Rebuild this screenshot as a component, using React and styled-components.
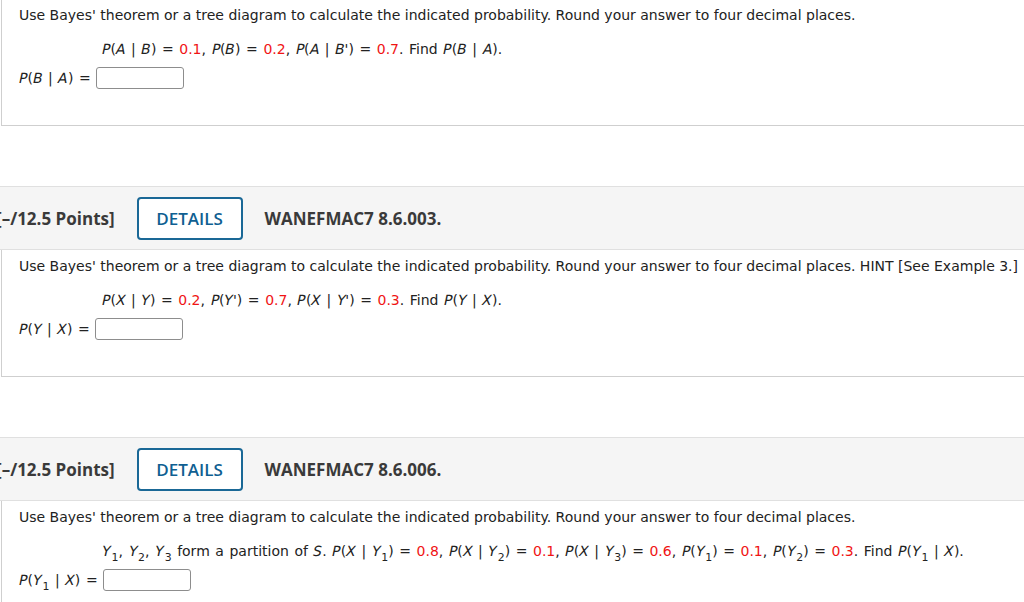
import React from 'react';
import styled, { createGlobalStyle } from 'styled-components';

const GlobalStyle = createGlobalStyle`
  html, body {
    margin: 0;
    padding: 0;
    background: #ffffff;
    overflow: hidden;
  }
`;

const Page = styled.main`
  width: 1040px;
  margin-top: -1px;
`;

const QuestionBox = styled.section`
  margin-left: 1px;
  border-left: 1px solid #cfcfcf;
  border-bottom: 1px solid #cfcfcf;
  padding: 6px 0 35px 17px;
  font-family: "DejaVu Sans", Verdana, sans-serif;
  font-size: 14px;
  color: #222;
`;

const Prompt = styled.p`
  margin: 0;
  line-height: 20px;
  white-space: nowrap;
`;

const Formula = styled.p`
  margin: 14px 0 0 83px;
  line-height: 20px;
  white-space: nowrap;
  word-spacing: 1.1px;
`;

const AnswerRow = styled.div`
  display: flex;
  align-items: center;
  gap: 5px;
  margin-top: 7px;
  height: 24px;
  word-spacing: 1.1px;
`;

const AnswerInput = styled.input`
  width: ${(p) => p.$width || 86}px;
  height: 20px;
  box-sizing: content-box;
  padding: 0;
  border: 1px solid #8d8d8d;
  border-radius: 3px;
  background: #fff;
`;

const Var = styled.i`
  display: inline-block;
  font-style: normal;
  transform: skewX(-12deg);
`;

const Num = styled.span`
  color: #f01414;
`;

const Sub = styled.sub`
  font-size: 0.78em;
  vertical-align: -0.45em;
  line-height: 0;
  margin-left: 1px;
`;

const Header = styled.header`
  display: flex;
  align-items: center;
  height: 62px;
  margin-top: 60px;
  background: #f5f5f5;
  border-top: 1px solid #e0e0e0;
  border-bottom: 1px solid #e0e0e0;
  font-family: "Open Sans", sans-serif;
  font-size: 17px;
  font-weight: 700;
  color: #3a3a3a;
`;

const Points = styled.span`
  margin-left: -4px;
`;

const DetailsButton = styled.button`
  margin-left: 22px;
  width: 106px;
  height: 43px;
  box-sizing: border-box;
  border: 2px solid #1a6896;
  border-radius: 4px;
  background: #ffffff;
  color: #0f5f92;
  font-family: "Open Sans", sans-serif;
  font-size: 17px;
  font-weight: 600;
  cursor: pointer;
`;

const Code = styled.span`
  margin-left: 22px;
`;

const given = (v) => <Num>{v}</Num>;

const QuestionHeader = ({ code }) => (
  <Header>
    <Points>[–/12.5 Points]</Points>
    <DetailsButton type="button">DETAILS</DetailsButton>
    <Code>{code}</Code>
  </Header>
);

const P = ({ children }) => (
  <>
    <Var>P</Var>({children})
  </>
);

const Y = ({ n }) => (
  <>
    <Var>Y</Var>
    <Sub>{n}</Sub>
  </>
);

const base =
  "Use Bayes' theorem or a tree diagram to calculate the indicated probability. Round your answer to four decimal places.";

export default function App() {
  return (
    <Page>
      <GlobalStyle />
      <QuestionBox>
        <Prompt>{base}</Prompt>
        <Formula>
          <P><Var>A</Var> | <Var>B</Var></P> = {given('0.1')}, <P><Var>B</Var></P> = {given('0.2')},{' '}
          <P><Var>A</Var> | <Var>B</Var>'</P> = {given('0.7')}. Find <P><Var>B</Var> | <Var>A</Var></P>.
        </Formula>
        <AnswerRow>
          <span>
            <P><Var>B</Var> | <Var>A</Var></P> =
          </span>
          <AnswerInput />
        </AnswerRow>
      </QuestionBox>

      <QuestionHeader code="WANEFMAC7 8.6.003." />
      <QuestionBox>
        <Prompt>{base} HINT [See Example 3.]</Prompt>
        <Formula>
          <P><Var>X</Var> | <Var>Y</Var></P> = {given('0.2')}, <P><Var>Y</Var>'</P> = {given('0.7')},{' '}
          <P><Var>X</Var> | <Var>Y</Var>'</P> = {given('0.3')}. Find <P><Var>Y</Var> | <Var>X</Var></P>.
        </Formula>
        <AnswerRow>
          <span>
            <P><Var>Y</Var> | <Var>X</Var></P> =
          </span>
          <AnswerInput />
        </AnswerRow>
      </QuestionBox>

      <QuestionHeader code="WANEFMAC7 8.6.006." />
      <QuestionBox>
        <Prompt>{base}</Prompt>
        <Formula>
          <Y n="1" />, <Y n="2" />, <Y n="3" /> form a partition of <Var>S</Var>.{' '}
          <P><Var>X</Var> | <Y n="1" /></P> = {given('0.8')}, <P><Var>X</Var> | <Y n="2" /></P> = {given('0.1')},{' '}
          <P><Var>X</Var> | <Y n="3" /></P> = {given('0.6')}, <P><Y n="1" /></P> = {given('0.1')},{' '}
          <P><Y n="2" /></P> = {given('0.3')}. Find <P><Y n="1" /> | <Var>X</Var></P>.
        </Formula>
        <AnswerRow>
          <span>
            <P><Y n="1" /> | <Var>X</Var></P> =
          </span>
          <AnswerInput />
        </AnswerRow>
      </QuestionBox>
    </Page>
  );
}
